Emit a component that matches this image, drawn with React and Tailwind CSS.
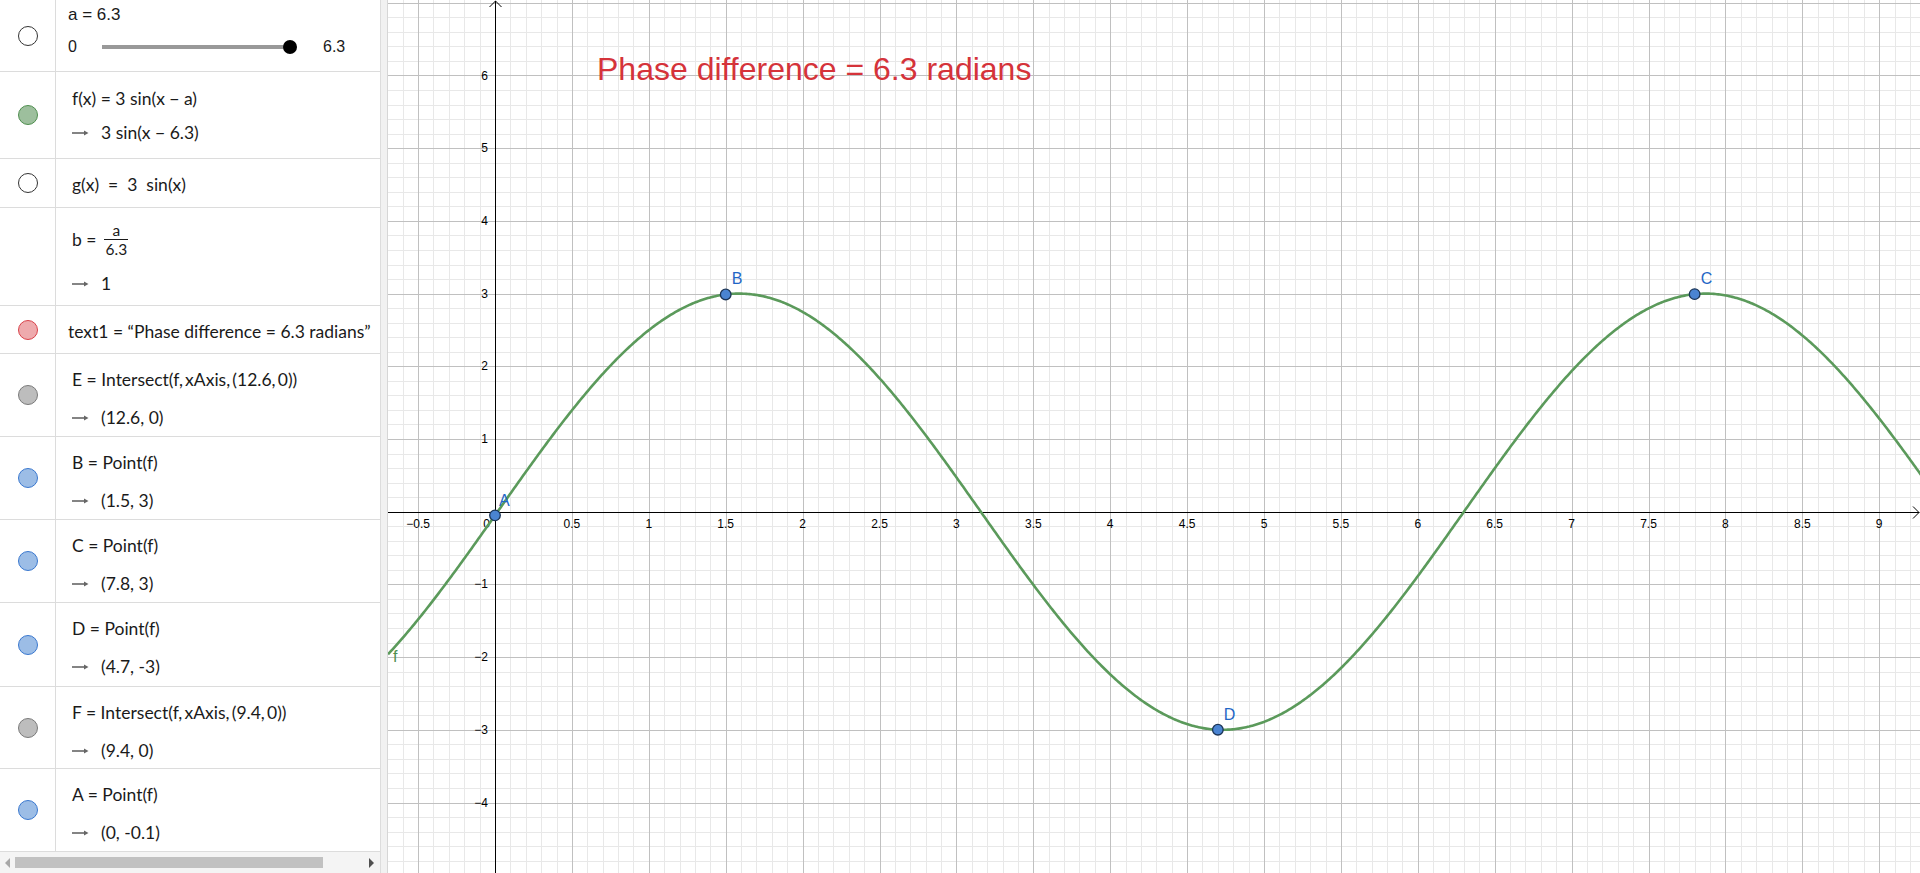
import React from 'react';

const W = 1532;
const H = 873;
const OX = 107;
const OY = 511.7;
const XU = 153.8;
const YU = 72.7;
const XMIN = -OX / XU;
const XMAX = (W - OX) / XU;
const YMAX = OY / YU;
const YMIN = -(H - OY) / YU;

const f = (x) => 3 * Math.sin(x - 6.3);
const px = (x) => OX + x * XU;
const py = (y) => OY - y * YU;
const crisp = (v) => Math.round(v) + 0.5;

const fmt = (v) => {
  const s = Number.isInteger(v) ? String(v) : v.toFixed(1);
  return v < 0 ? '\u2212' + s.slice(1) : s;
};

function Arrow() {
  return (
    <svg width="17" height="8" viewBox="0 0 17 8" className="shrink-0">
      <line x1="0" y1="4" x2="13" y2="4" stroke="#666" strokeWidth="1.6" />
      <polygon points="12,1.5 16.5,4 12,6.5" fill="#666" />
    </svg>
  );
}

function Dot({ fill, border }) {
  return <div className={`w-5 h-5 rounded-full border ${fill} ${border}`} />;
}

const icons = {
  white: <Dot fill="bg-white" border="border-[#333]" />,
  green: <Dot fill="bg-[#9dbf9d]" border="border-[#4f8f4f]" />,
  red: <Dot fill="bg-[#eeaaad]" border="border-[#d9424a]" />,
  gray: <Dot fill="bg-[#bdbdbd]" border="border-[#7a7a7a]" />,
  blue: <Dot fill="bg-[#9cbde6]" border="border-[#3a78cf]" />,
};

const math = "font-['Lato','Open_Sans',sans-serif] text-[17.5px] text-[#1a1a1a] leading-5";

const rows = [
  { icon: 'blue', h: 'h-[83px]', a: 'B = Point(f)', b: '(1.5, 3)' },
  { icon: 'blue', h: 'h-[83px]', a: 'C = Point(f)', b: '(7.8, 3)' },
  { icon: 'blue', h: 'h-[84px]', a: 'D = Point(f)', b: '(4.7, -3)' },
  { icon: 'gray', h: 'h-[82px]', a: 'F = Intersect(f,\u2009xAxis,\u2009(9.4,\u20090))', b: '(9.4, 0)' },
  { icon: 'blue', h: 'h-[83px]', a: 'A = Point(f)', b: '(0, -0.1)' },
];

function Row({ icon, h, children }) {
  return (
    <div className={`flex ${h} border-b border-[#dcdcdc]`}>
      <div className="w-[56px] shrink-0 border-r border-[#dcdcdc] flex items-center justify-center">
        {icon ? icons[icon] : null}
      </div>
      <div className="flex-1 min-w-0">{children}</div>
    </div>
  );
}

function TwoLine({ a, b, top = 'pt-4', gap = 'gap-[18px]' }) {
  return (
    <div className={`flex flex-col ${top} ${gap} pl-4 ${math}`}>
      <div className="whitespace-nowrap">{a}</div>
      <div className="flex items-center gap-3 whitespace-nowrap">
        <Arrow />
        <span>{b}</span>
      </div>
    </div>
  );
}

function AlgebraView() {
  return (
    <div className="w-[381px] shrink-0 flex flex-col border-r border-[#dcdcdc] bg-white">
      <Row icon="white" h="h-[72px]">
        <div className="pl-3 pt-[4px] font-['Liberation_Sans',Arial,sans-serif] text-[#1a1a1a]">
          <div className="text-[17px] leading-[22px]">a = 6.3</div>
          <div className="flex items-center mt-[11px] text-[16px] leading-5">
            <span className="w-[34px]">0</span>
            <div className="relative w-[188px] h-[4px] bg-[#999]">
              <div className="absolute -right-[7px] -top-[5px] w-[14px] h-[14px] rounded-full bg-black" />
            </div>
            <span className="ml-[33px]">6.3</span>
          </div>
        </div>
      </Row>
      <Row icon="green" h="h-[87px]">
        <TwoLine a="f(x) = 3  sin(x − a)" b="3  sin(x − 6.3)" top="pt-[17px]" gap="gap-[14px]" />
      </Row>
      <Row icon="white" h="h-[49px]">
        <div className={`pl-4 pt-4 whitespace-pre ${math}`}>g(x)  =  3  sin(x)</div>
      </Row>
      <Row h="h-[98px]">
        <div className={`pl-4 pt-[13px] ${math}`}>
          <div className="flex items-center gap-2">
            <span>b =</span>
            <span className="inline-flex flex-col items-center text-[15.5px] leading-[18px]">
              <span>a</span>
              <span className="w-[24px] border-t border-[#1a1a1a]" />
              <span>6.3</span>
            </span>
          </div>
          <div className="flex items-center gap-3 mt-[16px]">
            <Arrow />
            <span>1</span>
          </div>
        </div>
      </Row>
      <Row icon="red" h="h-[48px]">
        <div className={`pl-3 pt-4 whitespace-nowrap ${math}`}>text1 = “Phase difference = 6.3 radians”</div>
      </Row>
      <Row icon="gray" h="h-[83px]">
        <TwoLine a={'E = Intersect(f,\u2009xAxis,\u2009(12.6,\u20090))'} b="(12.6, 0)" />
      </Row>
      {rows.map((r) => (
        <Row key={r.a} icon={r.icon} h={r.h}>
          <TwoLine a={r.a} b={r.b} />
        </Row>
      ))}
      <div className="flex-1 flex items-center bg-[#f4f4f4] px-[4px]">
        <svg width="8" height="10" viewBox="0 0 8 10" className="shrink-0">
          <polygon points="6,0 6,10 1,5" fill="#a8a8a8" />
        </svg>
        <div className="ml-[3px] w-[308px] h-[11px] bg-[#c1c1c1]" />
        <div className="flex-1" />
        <svg width="8" height="10" viewBox="0 0 8 10" className="shrink-0 mr-[1px]">
          <polygon points="2,0 2,10 7,5" fill="#505050" />
        </svg>
      </div>
    </div>
  );
}

function GraphicsView() {
  const minorX = [];
  const majorX = [];
  for (let k = Math.ceil(XMIN / 0.1); k <= Math.floor(XMAX / 0.1); k++) {
    (k % 5 === 0 ? majorX : minorX).push(crisp(px(k * 0.1)));
  }
  const minorY = [];
  const majorY = [];
  for (let k = Math.ceil(YMIN / 0.2); k <= Math.floor(YMAX / 0.2); k++) {
    (k % 5 === 0 ? majorY : minorY).push(crisp(py(k * 0.2)));
  }

  let d = '';
  for (let x = XMIN; x <= XMAX + 0.01; x += 0.01) {
    d += `${d ? 'L' : 'M'}${px(x).toFixed(2)},${py(f(x)).toFixed(2)}`;
  }

  const xLabels = [];
  for (let k = -1; k <= 18; k++) if (k !== 0) xLabels.push(k / 2);
  const yLabels = [-4, -3, -2, -1, 1, 2, 3, 4, 5, 6];

  const points = [
    { n: 'A', x: 0, dx: 4, dy: -9 },
    { n: 'B', x: 1.5, dx: 6, dy: -10 },
    { n: 'C', x: 7.8, dx: 6, dy: -10 },
    { n: 'D', x: 4.7, dx: 6, dy: -10 },
  ];

  const ax = crisp(OX);
  const ay = crisp(OY);

  return (
    <div className="flex-1 min-w-0 bg-white overflow-hidden">
      <svg width={W} height={H} viewBox={`0 0 ${W} ${H}`} className="block">
        <g shapeRendering="crispEdges">
          {minorX.map((x) => <line key={'mx' + x} x1={x} y1="0" x2={x} y2={H} stroke="#e8e8e8" />)}
          {minorY.map((y) => <line key={'my' + y} x1="0" y1={y} x2={W} y2={y} stroke="#e8e8e8" />)}
          {majorX.map((x) => <line key={'Mx' + x} x1={x} y1="0" x2={x} y2={H} stroke="#c0c0c0" />)}
          {majorY.map((y) => <line key={'My' + y} x1="0" y1={y} x2={W} y2={y} stroke="#c0c0c0" />)}
          <line x1="0" y1={ay} x2={W - 1} y2={ay} stroke="#000" />
          <line x1={ax} y1="1" x2={ax} y2={H} stroke="#000" />
        </g>
        <polyline points={`${W - 7},${ay - 6} ${W - 1},${ay} ${W - 7},${ay + 6}`} fill="none" stroke="#000" />
        <polyline points={`${ax - 6},${7} ${ax},${1} ${ax + 6},${7}`} fill="none" stroke="#000" />

        <g fontFamily="'Liberation Sans', Arial, sans-serif" fontSize="12" fill="#000">
          {xLabels.map((v) => (
            <text key={'xl' + v} x={px(v)} y={OY + 16} textAnchor="middle">{fmt(v)}</text>
          ))}
          <text x={OX - 5} y={OY + 16} textAnchor="end">0</text>
          {yLabels.map((v) => (
            <text key={'yl' + v} x={OX - 7} y={py(v) + 4} textAnchor="end">{fmt(v)}</text>
          ))}
        </g>

        <path d={d} fill="none" stroke="#5b9a5b" strokeWidth="2.6" />
        <text x="5" y="662" fontFamily="'Liberation Sans', Arial, sans-serif" fontSize="16" fill="#4e8f4e">f</text>

        {points.map((p) => {
          const cx = px(p.x);
          const cy = py(f(p.x));
          return (
            <g key={p.n}>
              <circle cx={cx} cy={cy} r="5.3" fill="#4a84d2" stroke="#1c3557" strokeWidth="1.3" />
              <text x={cx + p.dx} y={cy + p.dy} fontFamily="'Liberation Sans', Arial, sans-serif" fontSize="16" fill="#1f66c6">{p.n}</text>
            </g>
          );
        })}

        <text x="209" y="80" fontFamily="'Liberation Sans', Arial, sans-serif" fontSize="32" fill="#d5333a">Phase difference = 6.3 radians</text>
      </svg>
    </div>
  );
}

export default function App() {
  return (
    <div className="flex w-[1920px] h-[873px] overflow-hidden bg-white">
      <AlgebraView />
      <div className="w-[7px] shrink-0 bg-[#f1f1f1] border-r border-[#d6d6d6]" />
      <GraphicsView />
    </div>
  );
}
